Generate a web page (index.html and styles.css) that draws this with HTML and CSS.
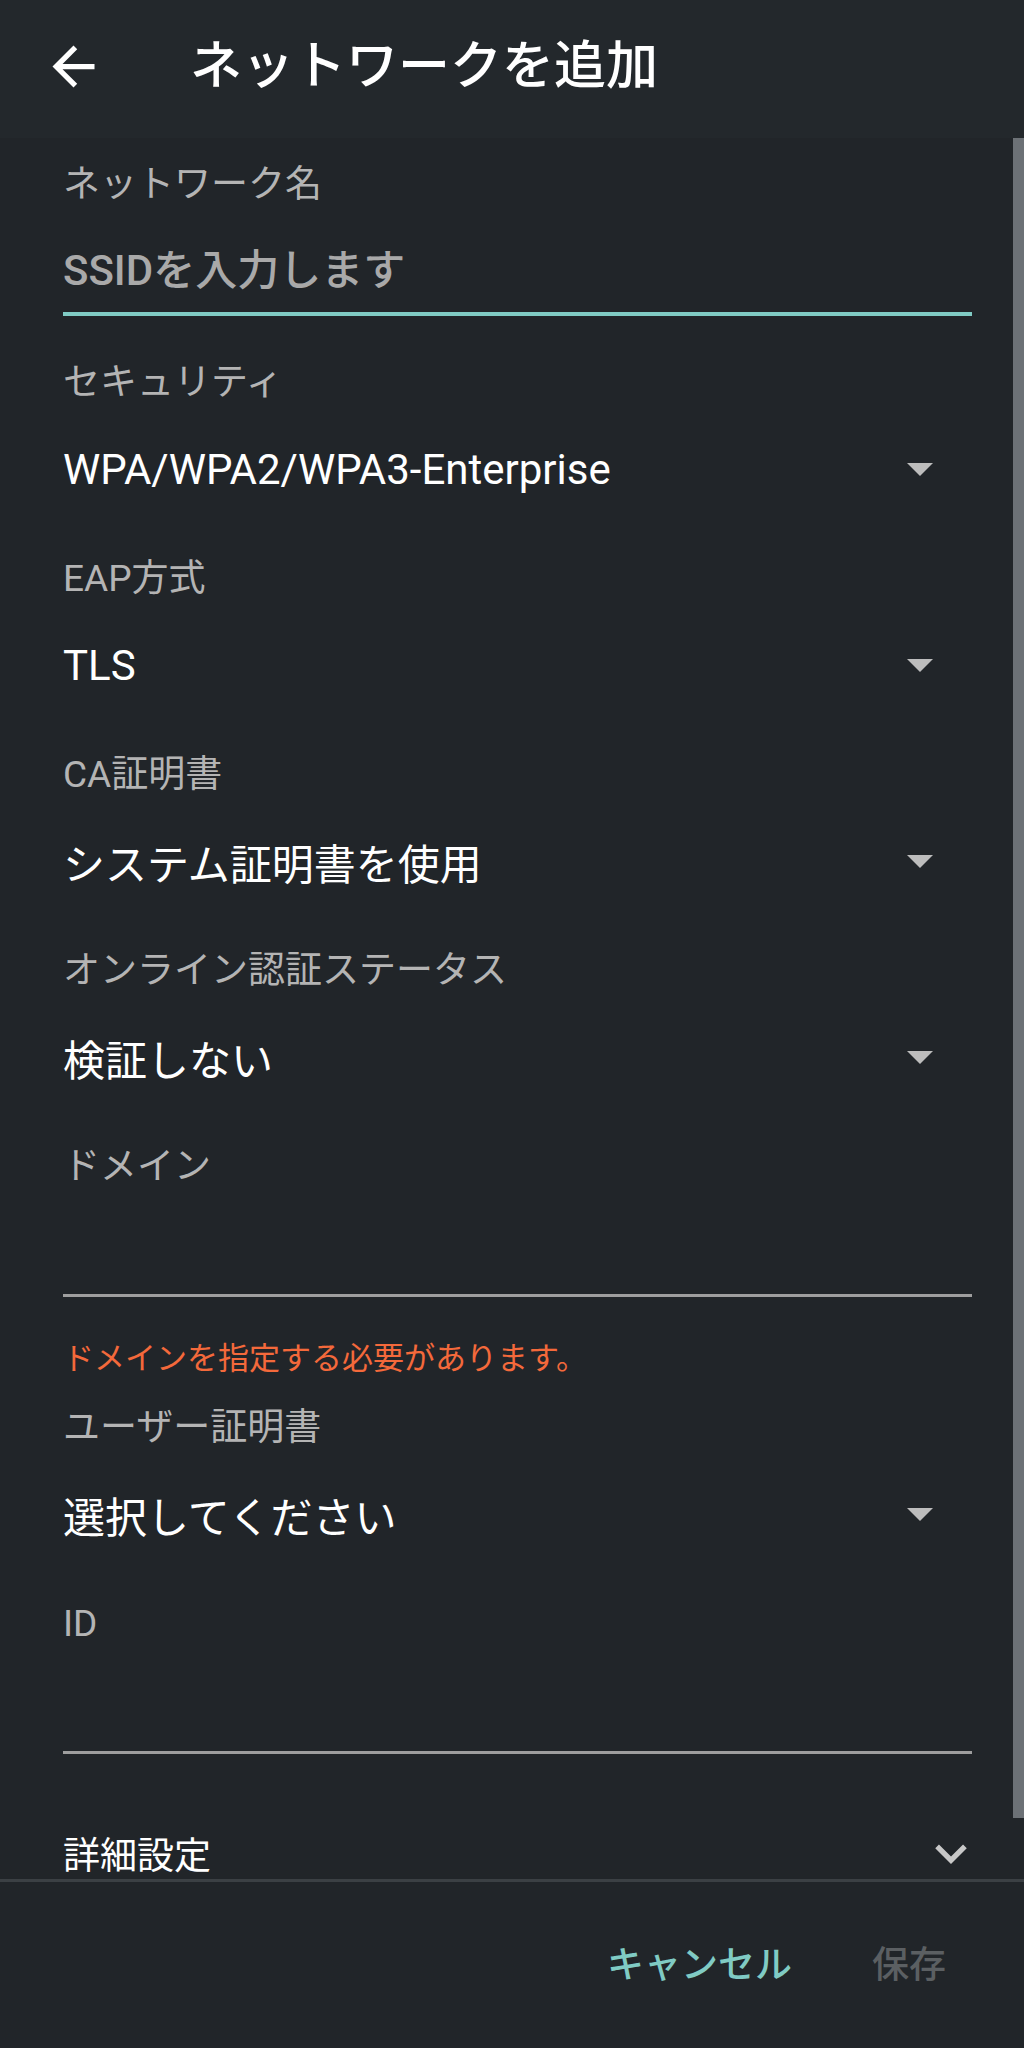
FILE: index.html
```html
<!DOCTYPE html>
<html lang="ja">
<head>
    <meta charset="UTF-8">
    <meta name="viewport" content="width=device-width, initial-scale=1.0">
    <title>ネットワークを追加</title>
    <link rel="stylesheet" href="styles.css">
</head>
<body>

    <!-- ヘッダー -->
    <header class="appbar">
        <button class="back-btn" aria-label="戻る">
            <svg viewBox="0 0 24 24" width="63" height="63"><path d="M20 11H7.83l5.59-5.59L12 4l-8 8 8 8 1.41-1.41L7.83 13H20v-2z" fill="#ffffff"/></svg>
        </button>
        <h1 class="appbar-title">ネットワークを追加</h1>
    </header>

    <!-- 入力フォーム -->
    <main class="content">
        <div class="scroll-thumb"></div>

        <section class="field">
            <div class="field-label">ネットワーク名</div>
            <div class="text-field focused"><span class="placeholder">SSIDを入力します</span></div>
        </section>

        <section class="spinner-field">
            <div class="field-label">セキュリティ</div>
            <div class="spinner">
                <span>WPA/WPA2/WPA3-Enterprise</span>
                <svg class="caret" viewBox="0 0 26 13" width="26" height="13"><polygon points="0,0 26,0 13,13"/></svg>
            </div>
        </section>

        <section class="spinner-field">
            <div class="field-label">EAP方式</div>
            <div class="spinner">
                <span>TLS</span>
                <svg class="caret" viewBox="0 0 26 13" width="26" height="13"><polygon points="0,0 26,0 13,13"/></svg>
            </div>
        </section>

        <section class="spinner-field">
            <div class="field-label">CA証明書</div>
            <div class="spinner">
                <span>システム証明書を使用</span>
                <svg class="caret" viewBox="0 0 26 13" width="26" height="13"><polygon points="0,0 26,0 13,13"/></svg>
            </div>
        </section>

        <section class="spinner-field">
            <div class="field-label">オンライン認証ステータス</div>
            <div class="spinner">
                <span>検証しない</span>
                <svg class="caret" viewBox="0 0 26 13" width="26" height="13"><polygon points="0,0 26,0 13,13"/></svg>
            </div>
        </section>

        <section class="field">
            <div class="field-label">ドメイン</div>
            <div class="text-field"></div>
            <p class="field-error">ドメインを指定する必要があります。</p>
        </section>

        <section class="spinner-field">
            <div class="field-label">ユーザー証明書</div>
            <div class="spinner">
                <span>選択してください</span>
                <svg class="caret" viewBox="0 0 26 13" width="26" height="13"><polygon points="0,0 26,0 13,13"/></svg>
            </div>
        </section>

        <section class="field">
            <div class="field-label">ID</div>
            <div class="text-field"></div>
        </section>

        <div class="advanced">
            <span>詳細設定</span>
            <svg viewBox="6 8 12 8" width="32" height="21"><path d="M16.59 8.59L12 13.17 7.41 8.59 6 10l6 6 6-6z" fill="#c8c8c8"/></svg>
        </div>
    </main>

    <!-- ボタン -->
    <footer class="actions">
        <button class="action-btn primary">キャンセル</button>
        <button class="action-btn" disabled>保存</button>
    </footer>

</body>
</html>
```

FILE: styles.css
```css
/* 全体 */
body {
    margin: 0;
    width: 1024px;
    height: 2048px;
    background-color: #212529;
    font-family: Roboto, "Noto Sans CJK JP", sans-serif;
    color: #ffffff;
    overflow: hidden;
}

button {
    font-family: inherit;
    background: none;
    border: none;
    padding: 0;
}

/* ヘッダー */
.appbar {
    height: 138px;
    background-color: #23282c;
    display: flex;
    align-items: center;
    box-sizing: border-box;
    padding-left: 42px;
}

.back-btn {
    width: 63px;
    height: 63px;
    display: flex;
    margin-top: -6px;
}

.appbar-title {
    margin: -4px 0 0 85px;
    font-size: 52px;
    font-weight: 500;
    line-height: 60px;
}

/* フォーム領域 */
.content {
    position: relative;
    height: 1744px;
    overflow: hidden;
    box-sizing: border-box;
    padding: 21px 52px 0 63px;
    border-bottom: 3px solid #3b4044;
}

.scroll-thumb {
    position: absolute;
    top: 0;
    right: 0;
    width: 11px;
    height: 1680px;
    background-color: #6c7176;
}

.field-label {
    font-size: 37px;
    line-height: 52px;
    color: #b4b4b4;
}

.field {
    margin-bottom: 41px;
}

.text-field {
    height: 60px;
    padding: 30px 0 11px;
    border-bottom: 3px solid #9e9e9e;
    font-size: 42px;
    line-height: 60px;
}

.text-field.focused {
    border-bottom: 4px solid #80cbc4;
}

.placeholder {
    color: #a9a9a9;
    font-weight: 500;
}

.field-error {
    margin: 40px 0 -20px;
    font-size: 31px;
    line-height: 44px;
    color: #f4693b;
}

/* ドロップダウン */
.spinner-field {
    margin-bottom: 24px;
}

.spinner {
    height: 120px;
    display: flex;
    align-items: center;
    justify-content: space-between;
    padding-right: 39px;
    font-size: 42px;
}

.caret {
    fill: #bdbdbd;
}

/* 詳細設定 */
.advanced {
    display: flex;
    align-items: center;
    justify-content: space-between;
    height: 90px;
    margin-top: 54px;
    padding-right: 5px;
    font-size: 37px;
}

/* 下部ボタン */
.actions {
    height: 163px;
    box-sizing: border-box;
    display: flex;
    justify-content: flex-end;
    align-items: flex-start;
    gap: 80px;
    padding: 59px 78px 0 0;
}

.action-btn {
    font-size: 37px;
    line-height: 50px;
    font-weight: 500;
    color: #5b5f62;
}

.action-btn.primary {
    color: #80cbc4;
}
```
